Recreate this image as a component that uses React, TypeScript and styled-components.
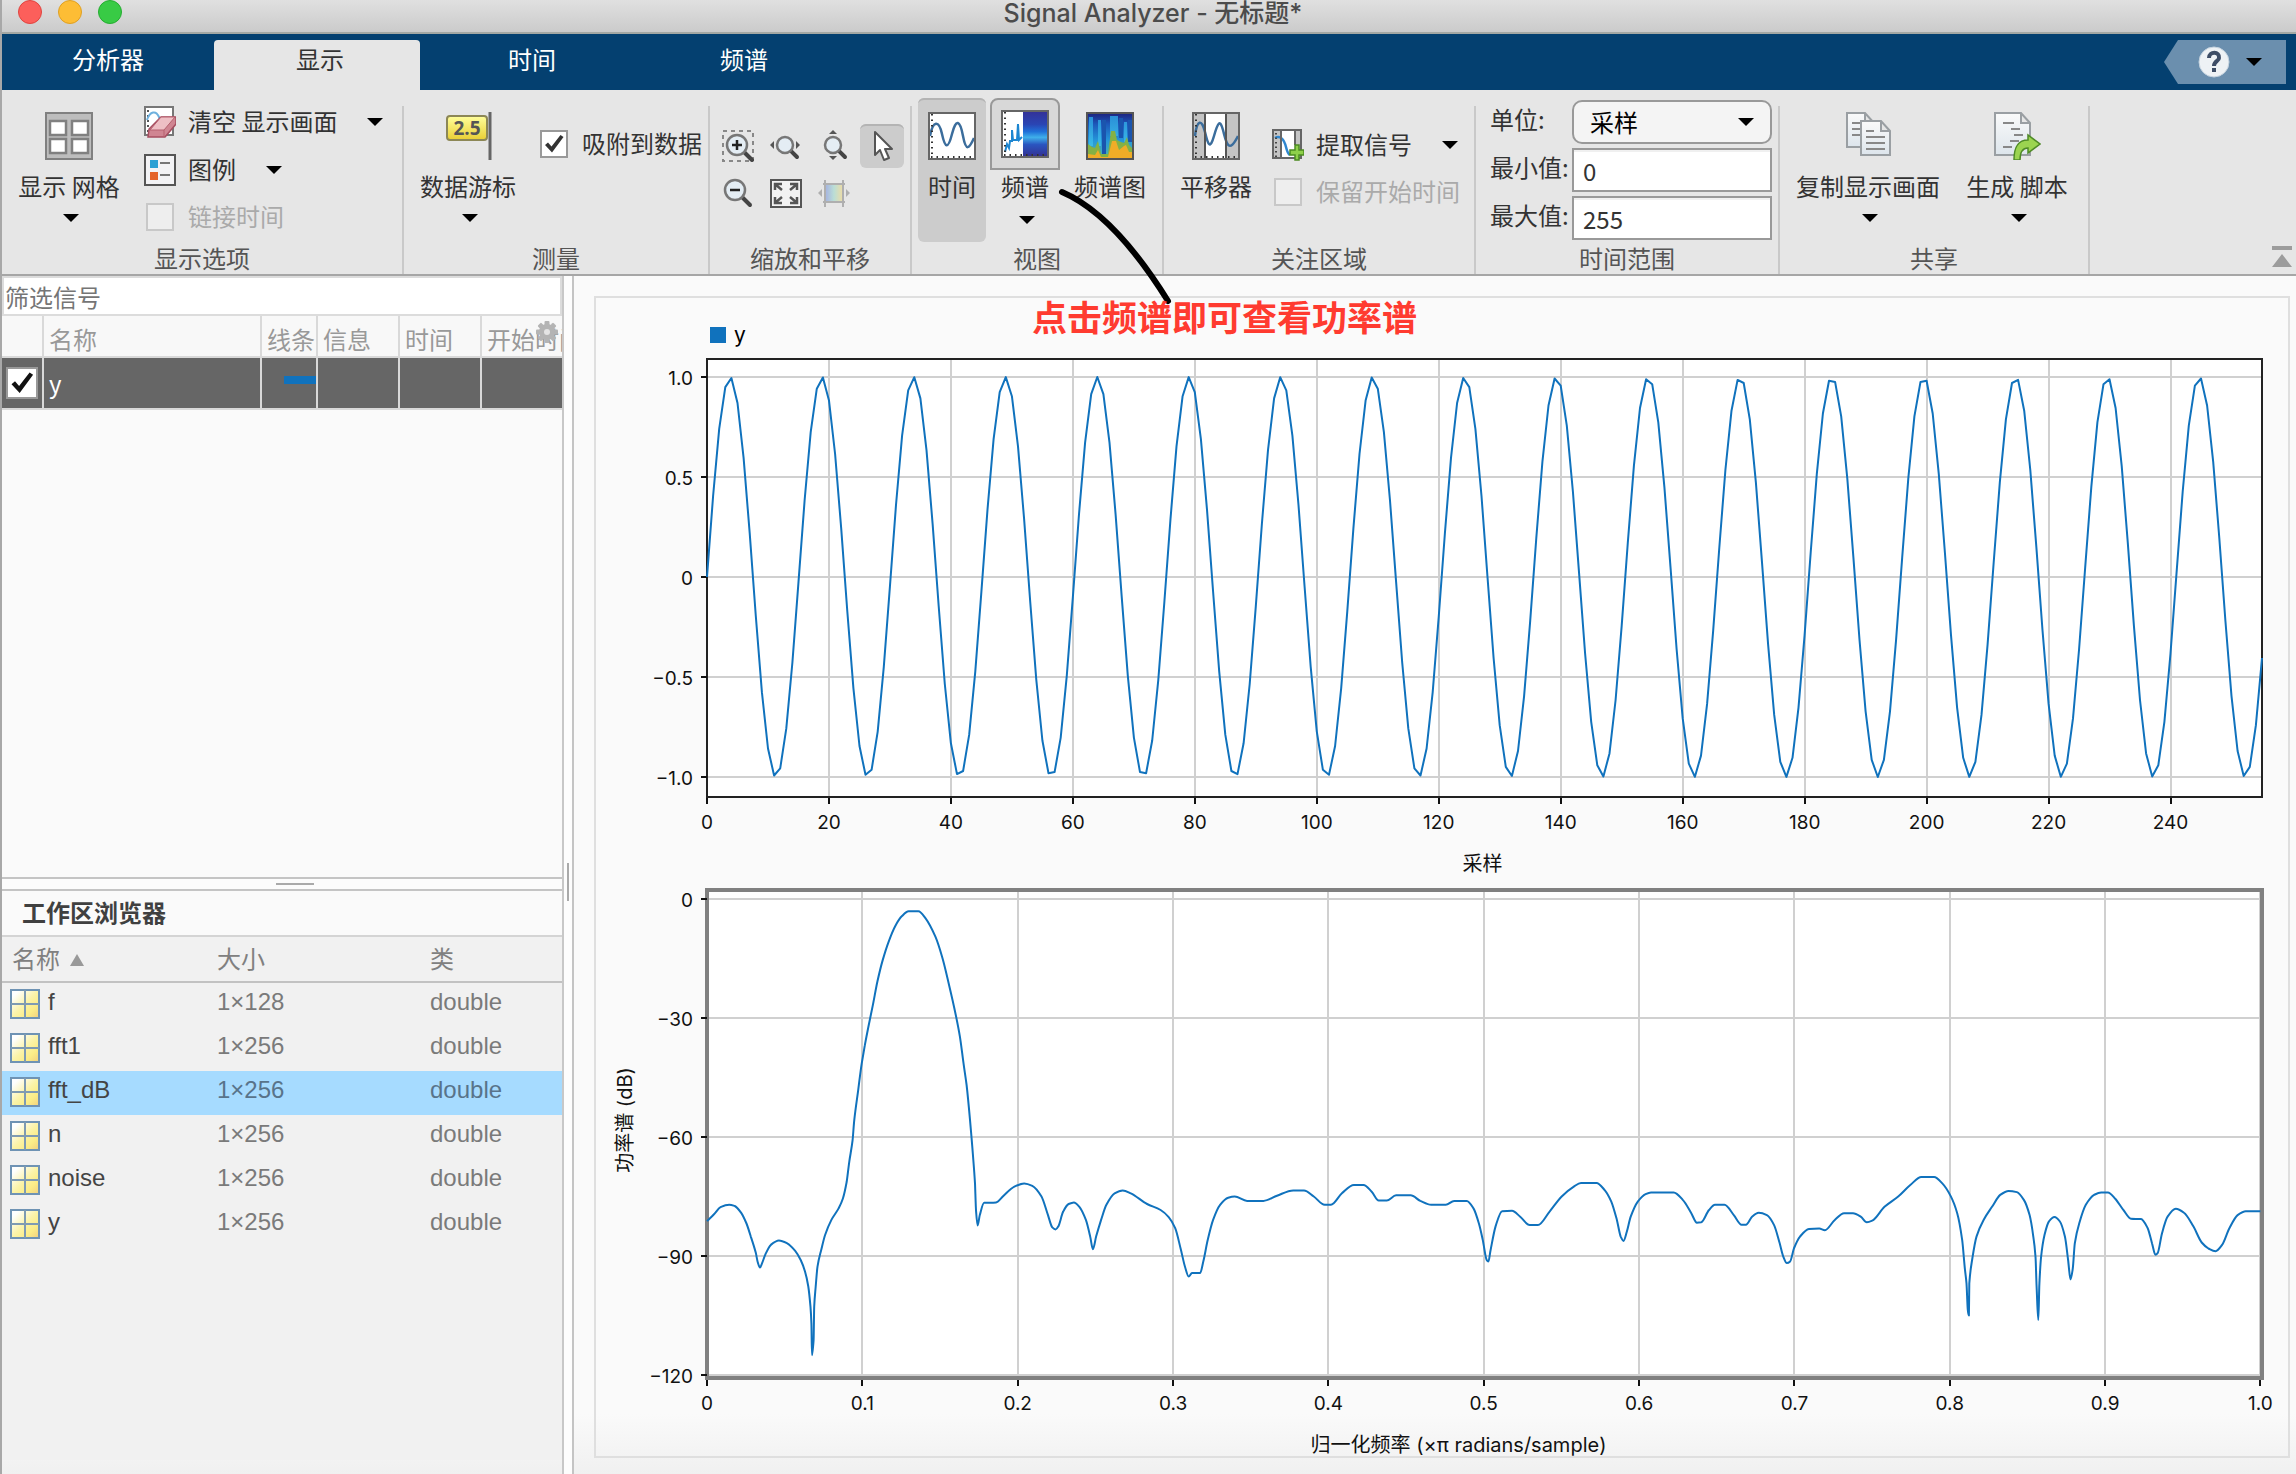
import React, { useLayoutEffect, useRef, useState } from "react";
import styled, { createGlobalStyle } from "styled-components";

const UI_FONT = '"Noto Sans CJK SC", "Noto Sans", sans-serif';
const LATIN_FONT = '"Liberation Sans", "Noto Sans CJK SC", sans-serif';
const CHART_FONT = 'Inter, "Noto Sans CJK SC", sans-serif';
const LINE_BLUE = "#1072bd";

const GlobalStyle = createGlobalStyle`
  *, *::before, *::after { box-sizing: border-box; }
  body { margin: 0; background: #fafafa; }
  button, input, select { font: inherit; color: inherit; margin: 0; }
`;

/* ---------- window frame ---------- */

const Window = styled.div`
  position: relative;
  display: flex;
  flex-direction: column;
  min-height: 100vh;
  border-left: 2px solid #a8a8a8;
  font: 24px/28px ${UI_FONT};
  color: #333;
  background: linear-gradient(#fafafa, #fafafa calc(100% - 60px), #f0f0f0);
`;

const TitleBar = styled.header`
  display: grid;
  grid-template-columns: 1fr auto 1fr;
  height: 34px;
  border-bottom: 2px solid #a4a8a4;
  background: linear-gradient(#e0e0e0, #cbcbcb);
`;

const Lights = styled.div`
  display: flex;
  gap: 16px;
  padding-left: 16px;
`;

const Light = styled.button<{ $fill: string; $edge: string }>`
  width: 24px;
  height: 24px;
  padding: 0;
  border: 1px solid ${(p) => p.$edge};
  border-radius: 50%;
  background: ${(p) => p.$fill};
`;

const Title = styled.h1`
  margin: 0;
  padding-left: 8px;
  font: 500 25px/26px ${CHART_FONT};
  color: #4c4c4c;
`;

const TabBar = styled.nav`
  display: flex;
  align-items: flex-end;
  gap: 6px;
  height: 56px;
  background: #044070;
`;

const Tab = styled.button<{ $active?: boolean }>`
  width: 206px;
  height: 50px;
  padding: 0 0 12px 6px;
  border: 0;
  border-radius: 4px 4px 0 0;
  background: ${(p) => (p.$active ? "#e6e6e6" : "transparent")};
  color: ${(p) => (p.$active ? "#333" : "#fff")};
`;

const HelpButton = styled.button`
  display: flex;
  align-items: center;
  justify-content: flex-end;
  gap: 16px;
  width: 122px;
  height: 44px;
  margin: 0 10px 6px auto;
  padding: 0 24px 0 0;
  border: 0;
  background: #6b8fae;
  clip-path: polygon(14px 0, 100% 0, 100% 100%, 14px 100%, 0 50%);
`;

/* ---------- ribbon ---------- */

const Ribbon = styled.section`
  display: flex;
  height: 186px;
  border-bottom: 2px solid #a6a6a6;
  background: #e6e6e6;
`;

const Group = styled.section<{ $width: number; $pad: number }>`
  display: flex;
  flex: none;
  flex-direction: column;
  justify-content: space-between;
  width: ${(p) => p.$width}px;
  background: linear-gradient(#c9c9c9, #c9c9c9) right bottom / 2px 168px no-repeat;
  --pad: ${(p) => p.$pad}px;
`;

const GroupBody = styled.div`
  display: flex;
  align-items: flex-start;
  padding: 8px 0 0 var(--pad);
`;

const GroupTitle = styled.h2`
  margin: 0 2px 2px 0;
  font: inherit;
  color: #555;
  text-align: center;
`;

const BigButton = styled.button<{ $width: number; $pressed?: boolean }>`
  display: flex;
  flex-direction: column;
  align-items: center;
  width: ${(p) => p.$width}px;
  height: 144px;
  padding: 14px 0 0;
  border: 0;
  border-radius: 6px;
  background: ${(p) => (p.$pressed ? "#cccccc" : "transparent")};
  box-shadow: ${(p) => (p.$pressed ? "inset 0 3px 0 -1px #b4b4b4" : "none")};
  white-space: nowrap;
  > svg:last-child { margin-left: 4px; }
`;

const BigLabel = styled.span`
  margin: 12px 0 14px;
`;

const SplitButton = styled.div`
  display: flex;
  flex-direction: column;
  width: 70px;
  margin: 0 14px 0 4px;
`;

const SplitTop = styled.button`
  height: 72px;
  padding: 10px 9px;
  border: 2px solid #999;
  border-radius: 8px 8px 0 0;
  background: #d8d8d8;
  line-height: 0;
`;

const SplitBottom = styled.button`
  display: flex;
  flex-direction: column;
  align-items: center;
  gap: 16px;
  height: 72px;
  padding: 2px 0 0;
  border: 0;
  background: transparent;
  > svg:last-child { margin-left: 4px; }
`;

const Stack = styled.div<{ $gap: number; $drop?: boolean }>`
  display: flex;
  flex-direction: column;
  padding-top: ${(p) => (p.$drop ? 23 : 0)}px;
  margin-left: ${(p) => p.$gap}px;
`;

const RowButton = styled.button`
  display: flex;
  align-items: center;
  height: 48px;
  padding: 0;
  border: 0;
  background: transparent;
  white-space: nowrap;
`;

const RowLabel = styled.label<{ $muted?: boolean }>`
  display: flex;
  align-items: center;
  height: 46px;
  color: ${(p) => (p.$muted ? "#aaa" : "#333")};
  white-space: nowrap;
`;

const IconSlot = styled.span`
  display: flex;
  justify-content: center;
  flex: none;
  width: 32px;
  margin-right: 12px;
`;

const RowText = styled.span`
  margin-right: 30px;
  padding-bottom: 3px;
`;

const CheckBox = styled.span<{ $size: number; $disabled?: boolean }>`
  position: relative;
  display: block;
  width: ${(p) => p.$size}px;
  height: ${(p) => p.$size}px;
  border: 2px solid ${(p) => (p.$disabled ? "#c8c8c8" : "#999")};
  background: ${(p) => (p.$disabled ? "#eee" : "#fff")};
  input {
    appearance: none;
    display: block;
    width: 100%;
    height: 100%;
  }
  svg {
    position: absolute;
    inset: 0;
    width: 100%;
    height: 100%;
    pointer-events: none;
  }
`;

const ToolGrid = styled.div`
  display: grid;
  grid-template-columns: repeat(4, 48px);
  padding-top: 24px;
`;

const ToolButton = styled.button<{ $pressed?: boolean }>`
  display: flex;
  align-items: center;
  justify-content: center;
  width: 44px;
  height: 44px;
  margin: 2px;
  padding: 0;
  border: 0;
  border-radius: 6px;
  background: ${(p) => (p.$pressed ? "#cccccc" : "transparent")};
  box-shadow: ${(p) => (p.$pressed ? "inset 0 3px 0 -1px #b4b4b4" : "none")};
`;

const RangeForm = styled.form`
  display: grid;
  flex: 1;
  grid-template-columns: 82px 1fr;
  grid-auto-rows: 44px;
  row-gap: 4px;
  padding: 2px 8px 0 0;
  label { line-height: 38px; white-space: nowrap; }
`;

const SelectBox = styled.div`
  position: relative;
  select {
    appearance: none;
    width: 100%;
    height: 44px;
    padding: 0 40px 1px 16px;
    border: 2px solid #999;
    border-radius: 10px;
    background: #f4f4f4;
    color: #000;
  }
  svg {
    position: absolute;
    right: 18px;
    top: 18px;
    pointer-events: none;
  }
`;

const RangeInput = styled.input`
  width: 100%;
  height: 44px;
  padding: 0 9px;
  border: 2px solid #999;
  background: #fff;
  box-shadow: inset 0 2px 0 #f0f0f0;
`;

const CollapseButton = styled.button`
  align-self: flex-end;
  margin: 0 4px 6px auto;
  padding: 0;
  border: 0;
  background: transparent;
  line-height: 0;
`;

/* ---------- left column ---------- */

const Main = styled.main`
  display: flex;
  flex: 1;
`;

const LeftColumn = styled.aside`
  display: flex;
  flex: none;
  flex-direction: column;
  width: 562px;
  border-right: 2px solid #c8c8c8;
`;

const SignalPanel = styled.section`
  position: relative;
  flex: 601 1 0;
`;

const FilterInput = styled.input`
  display: block;
  width: 100%;
  height: 40px;
  padding: 0 1px;
  border: 2px solid #dcdcdc;
  background: #fff;
  &::placeholder { color: #757575; opacity: 1; }
`;

const SignalTable = styled.table`
  width: 100%;
  table-layout: fixed;
  border-spacing: 0;
  th, td {
    overflow: hidden;
    padding: 0 0 0 5px;
    border-right: 2px solid #d9d9d9;
    border-bottom: 2px solid #d9d9d9;
    text-align: left;
    white-space: nowrap;
  }
  th:last-child, td:last-child { border-right: 0; }
  th { height: 42px; padding-top: 6px; background: #f8f8f8; color: #999; font-weight: 400; }
  td { height: 52px; background: #666; color: #fff; }
  td:first-child { padding-left: 4px; }
`;

const LineSwatch = styled.div`
  width: 32px;
  height: 8px;
  margin: 0 0 6px auto;
  background: ${LINE_BLUE};
`;

const GearButton = styled.button`
  position: absolute;
  top: 45px;
  right: 4px;
  padding: 0;
  border: 0;
  background: transparent;
  line-height: 0;
`;

const RowSplitter = styled.div`
  display: flex;
  align-items: center;
  justify-content: center;
  height: 14px;
  padding-left: 26px;
  border: solid #c4c4c4;
  border-width: 2px 0;
  background: #fcfcfc;
  &::before { content: ""; width: 38px; height: 2px; background: #aaa; }
`;

const ColumnSplitter = styled.div`
  display: flex;
  align-items: center;
  justify-content: center;
  width: 10px;
  padding-top: 14px;
  border-right: 2px solid #c4c4c4;
  background: #fdfdfd;
  &::before { content: ""; width: 2px; height: 38px; background: #aaa; }
`;

const WorkspacePanel = styled.section`
  display: flex;
  flex: 583 1 0;
  flex-direction: column;
`;

const WorkspaceTitle = styled.h2`
  height: 46px;
  margin: 0;
  padding-left: 20px;
  border-bottom: 2px solid #d4d4d4;
  font: 700 24px/42px ${UI_FONT};
  color: #404040;
`;

const WorkspaceBody = styled.div`
  flex: 1;
  margin-bottom: 14px;
  background: #f1f1f1;
`;

const WorkspaceTable = styled.table`
  width: 100%;
  table-layout: fixed;
  border-spacing: 0;
  th {
    height: 46px;
    padding: 0 0 2px;
    border-bottom: 2px solid #c2c2c2;
    color: #808080;
    font-weight: 400;
    text-align: left;
  }
  th:first-child { padding-left: 10px; }
`;

const SortMark = styled.svg`
  margin: 0 0 2px 10px;
`;

const VariableRow = styled.tr<{ $selected?: boolean }>`
  background: ${(p) => (p.$selected ? "#a6dbff" : "transparent")};
  td {
    height: 44px;
    padding: 0 0 6px;
    font-family: ${LATIN_FONT};
    color: ${(p) => (p.$selected ? "#58738a" : "#7a7a7a")};
  }
`;

const VariableName = styled.span`
  display: flex;
  gap: 8px;
  height: 32px;
  padding: 2px 0 0 8px;
  color: #444;
  svg { flex: none; margin-top: 1px; }
`;

/* ---------- chart area ---------- */

const Canvas = styled.section`
  display: flex;
  flex: 1;
  flex-direction: column;
  min-width: 0;
  margin: 20px 6px 16px 20px;
  border: 2px solid #dfdfdf;
`;

const Legend = styled.div`
  display: flex;
  align-items: center;
  gap: 8px;
  height: 52px;
  padding: 22px 0 0 114px;
  font: 21px/28px ${CHART_FONT};
  color: #000;
  &::before { content: ""; width: 16px; height: 16px; background: ${LINE_BLUE}; }
`;

const ChartBox = styled.div<{ $grow: number }>`
  flex: ${(p) => p.$grow} 1 0;
  min-height: 0;
  svg { display: block; overflow: visible; }
  text { font: 19px ${CHART_FONT}; fill: #111; }
  text.axis-title { font-size: 20px; }
`;

const Note = styled.p`
  position: absolute;
  top: 296px;
  left: 1030px;
  margin: 0;
  font: 700 35px/40px ${UI_FONT};
  color: #ff3b30;
  white-space: nowrap;
`;

const NoteStroke = styled.svg`
  position: absolute;
  top: 180px;
  left: 1048px;
  pointer-events: none;
`;

/* ---------- icons ---------- */

const Arrow = () => (
  <svg width="16" height="8" viewBox="0 0 16 8" aria-hidden="true">
    <path d="M0 0H16L8 8Z" fill="#000" />
  </svg>
);

const Tick = ({ color = "#333" }: { color?: string }) => (
  <svg viewBox="0 0 24 24" aria-hidden="true">
    <path d="M3 13 6 10.500 9.500 14.500 18.500 3 21.500 5 10 20.500Z" fill={color} />
  </svg>
);

const GridIcon = () => (
  <svg width="48" height="48" viewBox="0 0 48 48" aria-hidden="true">
    <rect x="1" y="1" width="46" height="46" fill="#bdbdbd" stroke="#808080" strokeWidth="2" />
    {[5, 27].map((x) =>
      [9, 27].map((y) => (
        <rect key={`${x}-${y}`} x={x} y={y} width="16" height="14" fill="#fff" stroke="#808080" strokeWidth="2.500" />
      ))
    )}
  </svg>
);

const EraseIcon = () => (
  <svg width="32" height="32" viewBox="0 0 32 32" aria-hidden="true">
    <rect x="1" y="1" width="28" height="28" fill="#fff" stroke="#777" strokeWidth="2" />
    <path d="M4 4V28" stroke="#555" strokeWidth="2" strokeDasharray="2 3" />
    <path d="M3 14C6 5 12 4 15 11S18 16 20 16" fill="none" stroke="#6fb1de" strokeWidth="2" />
    <path d="M17 11H32V18L21 31H4L5 23Z" fill="#d08592" stroke="#a64e60" strokeWidth="1.500" />
    <path d="M17 11H31L20 24H6Z" fill="#eebfc5" stroke="#b5616f" />
    <path d="M20 24V31" stroke="#b5616f" />
  </svg>
);

const LegendIcon = () => (
  <svg width="32" height="32" viewBox="0 0 32 32" aria-hidden="true">
    <rect x="1" y="1" width="30" height="30" fill="#f3f3f5" stroke="#555" strokeWidth="2" />
    <rect x="6" y="6" width="8" height="8" fill="#2ba0d4" />
    <rect x="6" y="18" width="8" height="8" fill="#e4632a" />
    <path d="M16 9H26M16 21H26" stroke="#777" strokeWidth="2" />
  </svg>
);

const CursorIcon = () => (
  <svg width="48" height="48" viewBox="0 0 48 48" aria-hidden="true">
    <defs>
      <linearGradient id="badge" x1="0" y1="0" x2="0" y2="1">
        <stop offset="0" stopColor="#ffff9c" />
        <stop offset="1" stopColor="#e9ce33" />
      </linearGradient>
    </defs>
    <rect x="3" y="4" width="40" height="24" rx="3" fill="url(#badge)" stroke="#8c8756" strokeWidth="2" />
    <text x="23" y="23" textAnchor="middle" fontFamily="Open Sans, sans-serif" fontWeight="700" fontSize="19" fill="#555">2.5</text>
    <path d="M46 0V48" stroke="#666" strokeWidth="3" />
  </svg>
);

const Lens = ({ cx, cy, r, sign }: { cx: number; cy: number; r: number; sign?: string }) => (
  <g>
    <path d={`M${cx + r * 0.7} ${cy + r * 0.7}l${r * 0.8} ${r * 0.8}`} stroke="#444" strokeWidth="4" strokeLinecap="round" />
    <circle cx={cx} cy={cy} r={r} fill="#e4edf4" stroke="#777" strokeWidth="2.500" />
    {sign === "+" && <path d={`M${cx - 5} ${cy}h10M${cx} ${cy - 5}v10`} stroke="#222" strokeWidth="2.500" />}
    {sign === "-" && <path d={`M${cx - 5} ${cy}h10`} stroke="#222" strokeWidth="2.500" />}
  </g>
);

const ZoomInIcon = () => (
  <svg width="32" height="32" viewBox="0 0 32 32" aria-hidden="true">
    <rect x="1" y="1" width="30" height="30" fill="none" stroke="#888" strokeWidth="2" strokeDasharray="4 4" />
    <Lens cx={15} cy={15} r={10} sign="+" />
  </svg>
);

const ZoomOutIcon = () => (
  <svg width="32" height="32" viewBox="0 0 32 32" aria-hidden="true">
    <Lens cx={13} cy={12} r={10} sign="-" />
  </svg>
);

const ZoomXIcon = () => (
  <svg width="32" height="32" viewBox="0 0 32 32" aria-hidden="true">
    <Lens cx={15} cy={15} r={8} />
    <path d="M4 11V19L0 15ZM26 11V19L30 15Z" fill="#555" />
  </svg>
);

const ZoomYIcon = () => (
  <svg width="32" height="32" viewBox="0 0 32 32" aria-hidden="true">
    <Lens cx={15} cy={15} r={8} />
    <path d="M11 4H19L15 0ZM11 26H19L15 30Z" fill="#555" />
  </svg>
);

const PointerIcon = () => (
  <svg width="32" height="32" viewBox="0 0 32 32" aria-hidden="true">
    <path d="M9 2V25L14 20 18 30 23 28 19 19H26Z" fill="#fff" stroke="#555" strokeWidth="2" strokeLinejoin="round" />
  </svg>
);

const FitIcon = () => (
  <svg width="32" height="32" viewBox="0 0 32 32" aria-hidden="true">
    <rect x="1" y="2" width="30" height="27" fill="#f2f2f2" stroke="#555" strokeWidth="2" />
    <path
      d="M5 12V6H12M20 6H27V12M27 19V25H20M12 25H5V19M6 7L12 12M26 7L20 12M6 24L12 19M26 24L20 19"
      fill="none"
      stroke="#555"
      strokeWidth="2.500"
    />
  </svg>
);

const PanIcon = () => (
  <svg width="32" height="32" viewBox="0 0 32 32" opacity="0.7" aria-hidden="true">
    <defs>
      <linearGradient id="spectrumBand">
        <stop offset="0" stopColor="#8a9be0" />
        <stop offset="0.5" stopColor="#a9dbd0" />
        <stop offset="1" stopColor="#f3d98a" />
      </linearGradient>
    </defs>
    <rect x="7" y="6" width="18" height="18" fill="url(#spectrumBand)" />
    <path d="M7 2V29M25 2V29M5 6H27M5 24H27" stroke="#999" strokeWidth="2" />
    <path d="M4 11V19L0 15ZM28 11V19L32 15Z" fill="#999" />
  </svg>
);

const PlotFrame = () => (
  <>
    <path d="M4 2V46" stroke="#333" strokeWidth="2" strokeDasharray="1.500 4" />
    <path d="M3 45H46" stroke="#333" strokeWidth="2" strokeDasharray="1.500 4" />
    <rect x="1" y="1" width="46" height="46" fill="none" stroke="#666" strokeWidth="2" />
  </>
);

const TimeIcon = () => (
  <svg width="48" height="48" viewBox="0 0 48 48" aria-hidden="true">
    <rect width="48" height="48" fill="#fff" />
    <path d="M2 24C5 8 11 8 14 22S20 38 24 22 32 8 35 24 41 37 46 26" fill="none" stroke="#3b6d9c" strokeWidth="2.500" />
    <PlotFrame />
  </svg>
);

const SpectrumIcon = () => (
  <svg width="48" height="48" viewBox="0 0 48 48" aria-hidden="true">
    <defs>
      <linearGradient id="haze" x1="0" y1="0" x2="0" y2="1">
        <stop offset="0" stopColor="#352f94" />
        <stop offset="0.3" stopColor="#2a45b4" />
        <stop offset="0.45" stopColor="#2070d8" />
        <stop offset="0.57" stopColor="#3fb0ea" />
        <stop offset="0.72" stopColor="#2a55c0" />
        <stop offset="1" stopColor="#352c8c" />
      </linearGradient>
    </defs>
    <rect width="48" height="48" fill="#fff" />
    <rect x="22" width="26" height="48" fill="url(#haze)" />
    <path d="M4 42 6 34 8 38 9 31H11V20L12 30H16L17 14 18 30 21 27" fill="none" stroke="#1c86d1" strokeWidth="2" />
    <PlotFrame />
  </svg>
);

const SpectrogramIcon = () => (
  <svg width="48" height="48" viewBox="0 0 48 48" aria-hidden="true">
    <defs>
      <linearGradient id="fade" x1="0" y1="0" x2="0" y2="1">
        <stop offset="0" stopColor="#1d1c78" />
        <stop offset="0.25" stopColor="#1c58ba" />
        <stop offset="0.6" stopColor="#2597da" />
        <stop offset="1" stopColor="#58b9a0" />
      </linearGradient>
      <linearGradient id="glow" x1="0" y1="0" x2="0" y2="1">
        <stop offset="0" stopColor="#2a8fd8" />
        <stop offset="1" stopColor="#3bbbe8" />
      </linearGradient>
    </defs>
    <rect width="48" height="48" fill="url(#fade)" />
    <path d="M3 5H7V34H3ZM12 8H15V34H12ZM24 4H32V24H24ZM38 10H41V30H38Z" fill="url(#glow)" />
    <path d="M16 8H20V42H16ZM33 6H37V26H33ZM42 8H46V30H42Z" fill="#1a55ae" />
    <path d="M2 47V32L6 35 9 36 12 29 15 42H22L25 19H29L31 28 35 30 38 31 41 25 43 33 46 36V47Z" fill="#84b145" />
    <path d="M2 47V42L9 43 12 38 15 45H22L26 29H30L33 38 38 34 40 33 43 40H46V47Z" fill="#f0ad27" />
    <rect x="1" y="1" width="46" height="46" fill="none" stroke="#555" strokeWidth="2" />
  </svg>
);

const PannerIcon = () => (
  <svg width="48" height="48" viewBox="0 0 48 48" aria-hidden="true">
    <rect width="48" height="48" fill="#c4c4c4" />
    <rect x="13" y="2" width="21" height="44" fill="#fff" />
    <path d="M3 24C5 7 10 7 13 20S18 38 22 24 28 7 31 18 36 44 46 24" fill="none" stroke="#3b6d9c" strokeWidth="2.500" />
    <path d="M13 2V46M34 2V46" stroke="#555" strokeWidth="2" />
    <PlotFrame />
  </svg>
);

const ExtractIcon = () => (
  <svg width="32" height="32" viewBox="0 0 32 32" aria-hidden="true">
    <rect x="1" y="1" width="28" height="28" fill="#c4c4c4" stroke="#666" strokeWidth="2" />
    <rect x="9" y="2" width="14" height="26" fill="#fff" />
    <path d="M3 9C8 6 12 10 14 18S17 25 18 26" fill="none" stroke="#2f86cf" strokeWidth="2.500" />
    <path d="M9 2V28M23 2V16" stroke="#666" strokeWidth="2" />
    <path d="M4 4V28" stroke="#444" strokeWidth="2" strokeDasharray="1.500 3" />
    <path d="M23 16H27V21H32V26H27V31H23V26H18V21H23Z" fill="#8fd04a" stroke="#4c8a22" strokeWidth="1.500" />
  </svg>
);

const Page = ({ x, y, w, h }: { x: number; y: number; w: number; h: number }) => (
  <path
    d={`M${x} ${y}h${w - 9}l9 10v${h - 10}h${-w}ZM${x + w - 9} ${y}v10h9`}
    fill="url(#paper)"
    stroke="#9a9fa3"
    strokeWidth="2"
  />
);

const PaperFill = () => (
  <defs>
    <linearGradient id="paper" x1="0" y1="0" x2="0" y2="1">
      <stop offset="0" stopColor="#fafafa" />
      <stop offset="1" stopColor="#dde5ec" />
    </linearGradient>
  </defs>
);

const CopyIcon = () => (
  <svg width="48" height="48" viewBox="0 0 48 48" aria-hidden="true">
    <PaperFill />
    <Page x={3} y={1} w={27} h={34} />
    <path d="M8 11H16M8 17H16M8 23H16" stroke="#888" strokeWidth="2" />
    <Page x={17} y={9} w={29} h={34} />
    <path d="M22 19H30M22 25H41M22 31H41M22 37H41" stroke="#888" strokeWidth="2" />
  </svg>
);

const ScriptIcon = () => (
  <svg width="48" height="48" viewBox="0 0 48 48" aria-hidden="true">
    <Page x={2} y={1} w={35} h={42} />
    <path d="M10 11H21M18 17H27M21 23H30M17 29H26M10 35H19" stroke="#888" strokeWidth="2" />
    <path d="M21 48C21 36 24 28 35 28V23L47 32 35 41V36C29 36 27 40 27 48Z" fill="#9bd450" stroke="#4e8a26" strokeWidth="1.500" />
  </svg>
);

const HelpIcon = () => (
  <svg width="32" height="32" viewBox="0 0 32 32" aria-hidden="true">
    <circle cx="16" cy="16" r="15" fill="#eef2f5" stroke="#c4d2de" />
    <path d="M11 12C11 5 22 5 21 12 21 15 16 15 16 20" fill="none" stroke="#3d4d66" strokeWidth="4" />
    <rect x="14" y="22" width="4" height="4" fill="#3d4d66" />
  </svg>
);

const CollapseIcon = () => (
  <svg width="20" height="22" viewBox="0 0 20 22" aria-hidden="true">
    <path d="M0 0H20V4H0ZM10 8L20 21H0Z" fill="#9c9c9c" />
  </svg>
);

const GearIcon = () => (
  <svg width="22" height="22" viewBox="0 0 22 22" aria-hidden="true">
    {[0, 45, 90, 135].map((a) => (
      <rect key={a} x="8.500" y="0" width="5" height="22" rx="1" fill="#b4b4b4" transform={`rotate(${a} 11 11)`} />
    ))}
    <circle cx="11" cy="11" r="8" fill="#b4b4b4" />
    <circle cx="11" cy="11" r="3" fill="#e4e4e4" />
  </svg>
);

const MatrixIcon = () => (
  <svg width="30" height="30" viewBox="0 0 30 30" aria-hidden="true">
    <defs>
      <linearGradient id="cell" x1="0" y1="0" x2="1" y2="1">
        <stop offset="0.15" stopColor="#ffffff" />
        <stop offset="0.5" stopColor="#fbf3a8" />
        <stop offset="0.75" stopColor="#fbec86" />
        <stop offset="1" stopColor="#f0cf80" />
      </linearGradient>
    </defs>
    <rect x="1" y="1" width="28" height="28" fill="url(#cell)" stroke="#6f93b4" strokeWidth="2" />
    <path d="M15 1V29M1 15H29" stroke="#7f9bb2" strokeWidth="2" />
  </svg>
);

/* ---------- charts ---------- */

type Point = [number, number];

interface ChartProps {
  grow: number;
  margin: { top: number; right: number; bottom: number; left: number };
  xRange: Point;
  yRange: Point;
  xTicks: number[];
  yTicks: number[];
  formatX: (v: number) => string;
  formatY: (v: number) => string;
  xTitle: string;
  yTitle?: string;
  titleShift?: Point;
  points: Point[];
  smooth?: boolean;
  frame: { color: string; width: number };
}

const f1 = (v: number) => v.toFixed(1);

const straightPath = (pts: Point[]) => "M" + pts.map(([x, y]) => `${f1(x)} ${f1(y)}`).join("L");

// monotone cubic interpolation: smooth, with no overshoot at the notches
const smoothPath = (pts: Point[]) => {
  const n = pts.length;
  const slope = pts.slice(1).map(([x, y], i) => (y - pts[i][1]) / (x - pts[i][0]));
  const tangent = pts.map((_, i) => {
    if (i === 0) return slope[0];
    if (i === n - 1) return slope[n - 2];
    const a = slope[i - 1];
    const b = slope[i];
    return a * b <= 0 ? 0 : (2 * a * b) / (a + b);
  });
  let d = `M${f1(pts[0][0])} ${f1(pts[0][1])}`;
  for (let i = 0; i < n - 1; i++) {
    const [x0, y0] = pts[i];
    const [x1, y1] = pts[i + 1];
    const h = (x1 - x0) / 3;
    d += `C${f1(x0 + h)} ${f1(y0 + h * tangent[i])} ${f1(x1 - h)} ${f1(y1 - h * tangent[i + 1])} ${f1(x1)} ${f1(y1)}`;
  }
  return d;
};

const Chart = ({
  grow, margin, xRange, yRange, xTicks, yTicks, formatX, formatY,
  xTitle, yTitle, titleShift = [0, 0], points, smooth, frame,
}: ChartProps) => {
  const box = useRef<HTMLDivElement>(null);
  const [size, setSize] = useState({ w: 0, h: 0 });

  useLayoutEffect(() => {
    const el = box.current;
    if (!el) return;
    const measure = () => setSize({ w: el.clientWidth, h: el.clientHeight });
    measure();
    const observer = new ResizeObserver(measure);
    observer.observe(el);
    return () => observer.disconnect();
  }, []);

  const left = margin.left;
  const right = size.w - margin.right;
  const top = margin.top;
  const bottom = size.h - margin.bottom;
  const sx = (v: number) => left + ((v - xRange[0]) / (xRange[1] - xRange[0])) * (right - left);
  const sy = (v: number) => bottom - ((v - yRange[0]) / (yRange[1] - yRange[0])) * (bottom - top);
  const edge = bottom + frame.width / 2;
  const titleY = (top + bottom) / 2 + titleShift[1];
  const screen = points.map(([x, y]): Point => [sx(x), sy(y)]);

  return (
    <ChartBox $grow={grow} ref={box}>
      {size.w > 0 && (
        <svg width={size.w} height={size.h} role="img" aria-label={yTitle ?? xTitle}>
          <rect x={left} y={top} width={right - left} height={bottom - top} fill="#fff" />
          <g stroke="#d0d0d0" strokeWidth="2">
            {xTicks.map((t) => <path key={t} d={`M${Math.round(sx(t))} ${top}V${bottom}`} />)}
            {yTicks.map((t) => <path key={t} d={`M${left} ${Math.round(sy(t))}H${right}`} />)}
          </g>
          <rect x={left} y={top} width={right - left} height={bottom - top} fill="none" stroke={frame.color} strokeWidth={frame.width} />
          <g stroke="#111" strokeWidth="2">
            {xTicks.map((t) => <path key={t} d={`M${Math.round(sx(t))} ${edge}v6`} />)}
            {yTicks.map((t) => <path key={t} d={`M${left - 6} ${Math.round(sy(t))}h6`} />)}
          </g>
          <path
            d={smooth ? smoothPath(screen) : straightPath(screen)}
            fill="none"
            stroke={LINE_BLUE}
            strokeWidth="2"
            strokeLinejoin="round"
          />
          {xTicks.map((t) => (
            <text key={t} x={sx(t)} y={bottom + 32} textAnchor="middle">{formatX(t)}</text>
          ))}
          {yTicks.map((t) => (
            <text key={t} x={left - 14} y={sy(t) + 8} textAnchor="end">{formatY(t)}</text>
          ))}
          <text className="axis-title" x={(left + right) / 2 + titleShift[0]} y={bottom + 74} textAnchor="middle">{xTitle}</text>
          {yTitle && (
            <text className="axis-title" transform={`translate(36 ${titleY}) rotate(-90)`} textAnchor="middle">{yTitle}</text>
          )}
        </svg>
      )}
    </ChartBox>
  );
};

const minus = (s: string) => s.replace("-", "−");
const oneDecimal = (v: number) => (v === 0 ? "0" : minus(v.toFixed(1)));

// 17 full cycles over a 256-sample record
const signal: Point[] = Array.from({ length: 256 }, (_, n) => [n, Math.sin((2 * Math.PI * 17 * n) / 256)]);

// power spectrum, normalised frequency against dB
const spectrum: Point[] = [
  [0, -81.2], [0.0045, -79.5], [0.0087, -77.7], [0.0143, -77.1], [0.0178, -77.4], [0.022, -79.1], [0.0254, -81.8],
  [0.0282, -85.1], [0.0314, -89.2], [0.0328, -91.8], [0.0341, -92.9], [0.0355, -91.8], [0.0376, -89.6], [0.0411, -87.2],
  [0.0463, -86.1], [0.0516, -86.8], [0.0568, -88.7], [0.0603, -91], [0.0631, -93.9], [0.0652, -97.7], [0.0666, -102.8],
  [0.0672, -107], [0.0676, -115], [0.0686, -111.2], [0.069, -102.8], [0.07, -97.7], [0.0711, -92.7], [0.0735, -88.5],
  [0.076, -84.7], [0.0801, -80.9], [0.0847, -78], [0.0875, -75.5], [0.0899, -71.3], [0.0916, -66.2], [0.0937, -60.8],
  [0.0948, -55.7], [0.0973, -48.2], [0.0996, -41.5], [0.1016, -36.9], [0.1039, -32.2], [0.1068, -26.7], [0.1097, -20.8],
  [0.1131, -15.4], [0.1169, -10.8], [0.1212, -6.8], [0.1255, -4.3], [0.1298, -3.1], [0.1361, -3.1], [0.1407, -4.9],
  [0.147, -9.5], [0.1513, -14.5], [0.1556, -21.3], [0.1599, -28.8], [0.1628, -34.7], [0.1651, -41.4], [0.1671, -46.9],
  [0.1693, -55.7], [0.1711, -64.1], [0.1725, -71.7], [0.1732, -78.8], [0.1742, -82.3], [0.1756, -79.7], [0.1784, -76.6],
  [0.1861, -76.5], [0.1909, -74.8], [0.1979, -72.5], [0.2042, -71.7], [0.2094, -72.3], [0.2153, -75], [0.2195, -79.7],
  [0.2223, -82.8], [0.2244, -83.3], [0.2261, -82.6], [0.2293, -78.8], [0.2328, -76.9], [0.2362, -76.5], [0.2397, -77.6],
  [0.2439, -80.9], [0.2467, -85.1], [0.2484, -88.3], [0.2505, -85.1], [0.2537, -80.9], [0.2571, -77.1], [0.2624, -74.2],
  [0.2676, -73.5], [0.2728, -74.2], [0.2833, -76.9], [0.292, -78.4], [0.2972, -80.2], [0.3014, -83], [0.3049, -88.1],
  [0.3077, -92.7], [0.3101, -95.2], [0.3122, -94.3], [0.3174, -94.3], [0.3195, -91.4], [0.3223, -86], [0.3258, -80.9],
  [0.3303, -77.1], [0.3355, -75.3], [0.3397, -75], [0.3477, -76.1], [0.3582, -76.1], [0.3669, -74.8], [0.3774, -73.5],
  [0.3843, -73.5], [0.3906, -75], [0.3976, -77.1], [0.4017, -77.1], [0.4087, -74.2], [0.4164, -72.1], [0.4226, -72.1],
  [0.4279, -73.8], [0.4324, -76], [0.4376, -76], [0.4436, -74.7], [0.453, -74.7], [0.4592, -76.1], [0.4662, -77.1],
  [0.4756, -77.1], [0.4809, -76.1], [0.4891, -76.1], [0.4934, -78], [0.4969, -81.8], [0.4994, -86], [0.5019, -91],
  [0.503, -91.4], [0.5044, -88.5], [0.5076, -82.6], [0.5118, -78.7], [0.5182, -78.6], [0.5235, -80.1], [0.5296, -82.2],
  [0.5349, -82.2], [0.5424, -78.8], [0.5502, -75], [0.558, -72.5], [0.5626, -71.6], [0.5726, -71.6], [0.5779, -73.4],
  [0.5821, -76.3], [0.5857, -80.9], [0.5882, -85.1], [0.59, -86.2], [0.5921, -83.9], [0.5946, -80.1], [0.5992, -76.3],
  [0.6042, -74.4], [0.6077, -74], [0.6223, -74], [0.6283, -75.9], [0.6336, -79.2], [0.6372, -81.6], [0.64, -81.5],
  [0.645, -78.4], [0.6489, -77.1], [0.655, -77.1], [0.661, -79.7], [0.666, -82.1], [0.6688, -82.1], [0.6727, -80.1],
  [0.677, -79.1], [0.6823, -79.7], [0.6869, -82.2], [0.6905, -86.8], [0.6929, -90.2], [0.6951, -91.8], [0.6972, -91.4],
  [0.6997, -88.1], [0.7036, -85.1], [0.7093, -83.2], [0.716, -83.1], [0.7196, -83.5], [0.726, -80.9], [0.732, -79.2],
  [0.7377, -79.2], [0.7427, -80.1], [0.7466, -81.5], [0.7501, -81.1], [0.758, -77.6], [0.7668, -75], [0.7746, -72.1],
  [0.7817, -70.1], [0.7899, -70.1], [0.7952, -71.7], [0.8006, -74.9], [0.8048, -79.2], [0.808, -86], [0.8098, -93.5],
  [0.8108, -96.9], [0.8116, -103.6], [0.8123, -105], [0.8126, -96.9], [0.8144, -91], [0.8172, -85.1], [0.8218, -80.9],
  [0.8272, -77.6], [0.8325, -74.6], [0.8379, -73.6], [0.8432, -73.9], [0.8478, -75.9], [0.8514, -79.7], [0.8538, -85.1],
  [0.8552, -90.2], [0.8559, -97.7], [0.857, -106.1], [0.8577, -96.9], [0.8588, -90.2], [0.861, -84.7], [0.8638, -81.3],
  [0.8674, -80.2], [0.8709, -81.3], [0.8741, -85.1], [0.8762, -91], [0.8777, -95.9], [0.8791, -93.5], [0.8805, -86.8],
  [0.8833, -81.8], [0.8876, -77.1], [0.8929, -74.6], [0.8975, -74], [0.9018, -74], [0.9064, -75.5], [0.9118, -78.4],
  [0.9167, -80.6], [0.9231, -80.7], [0.9274, -83], [0.9302, -86.8], [0.9324, -89.7], [0.9338, -89.3], [0.9366, -84.3],
  [0.9402, -80.1], [0.9455, -78.1], [0.9508, -79.1], [0.9569, -82.6], [0.9622, -86.6], [0.9665, -88.1], [0.9711, -88.8],
  [0.9753, -87.2], [0.98, -83], [0.9853, -79.7], [0.9906, -78.7], [1, -78.7],
];

const timeTicks = Array.from({ length: 13 }, (_, i) => i * 20);
const freqTicks = Array.from({ length: 11 }, (_, i) => i / 10);

const variables = [
  { name: "f", size: "1×128", type: "double" },
  { name: "fft1", size: "1×256", type: "double" },
  { name: "fft_dB", size: "1×256", type: "double", selected: true },
  { name: "n", size: "1×256", type: "double" },
  { name: "noise", size: "1×256", type: "double" },
  { name: "y", size: "1×256", type: "double" },
];

/* ---------- page ---------- */

export default function App() {
  return (
    <>
      <GlobalStyle />
      <Window>
        <TitleBar>
          <Lights>
            <Light $fill="#fc5f5b" $edge="#e0443f" aria-label="关闭" />
            <Light $fill="#fdbd35" $edge="#dfa023" aria-label="最小化" />
            <Light $fill="#38cb45" $edge="#25ad31" aria-label="缩放" />
          </Lights>
          <Title>Signal Analyzer - 无标题*</Title>
        </TitleBar>

        <TabBar>
          <Tab>分析器</Tab>
          <Tab $active>显示</Tab>
          <Tab>时间</Tab>
          <Tab>频谱</Tab>
          <HelpButton aria-label="帮助">
            <HelpIcon />
            <Arrow />
          </HelpButton>
        </TabBar>

        <Ribbon>
          <Group $width={402} $pad={16}>
            <GroupBody>
              <BigButton $width={102}>
                <GridIcon />
                <BigLabel>显示 网格</BigLabel>
                <Arrow />
              </BigButton>
              <Stack $gap={24}>
                <RowButton>
                  <IconSlot><EraseIcon /></IconSlot>
                  <RowText>清空 显示画面</RowText>
                  <Arrow />
                </RowButton>
                <RowButton>
                  <IconSlot><LegendIcon /></IconSlot>
                  <RowText>图例</RowText>
                  <Arrow />
                </RowButton>
                <RowLabel $muted>
                  <IconSlot>
                    <CheckBox $size={28} $disabled><input type="checkbox" disabled /></CheckBox>
                  </IconSlot>
                  <RowText>链接时间</RowText>
                </RowLabel>
              </Stack>
            </GroupBody>
            <GroupTitle>显示选项</GroupTitle>
          </Group>

          <Group $width={306} $pad={16}>
            <GroupBody>
              <BigButton $width={96}>
                <CursorIcon />
                <BigLabel>数据游标</BigLabel>
                <Arrow />
              </BigButton>
              <Stack $gap={22} $drop>
                <RowLabel>
                  <IconSlot>
                    <CheckBox $size={28}>
                      <input type="checkbox" defaultChecked />
                      <Tick />
                    </CheckBox>
                  </IconSlot>
                  <RowText>吸附到数据</RowText>
                </RowLabel>
              </Stack>
            </GroupBody>
            <GroupTitle>测量</GroupTitle>
          </Group>

          <Group $width={202} $pad={4}>
            <GroupBody>
              <ToolGrid>
                <ToolButton aria-label="放大"><ZoomInIcon /></ToolButton>
                <ToolButton aria-label="水平缩放"><ZoomXIcon /></ToolButton>
                <ToolButton aria-label="垂直缩放"><ZoomYIcon /></ToolButton>
                <ToolButton aria-label="指针" $pressed><PointerIcon /></ToolButton>
                <ToolButton aria-label="缩小"><ZoomOutIcon /></ToolButton>
                <ToolButton aria-label="适合视图"><FitIcon /></ToolButton>
                <ToolButton aria-label="平移"><PanIcon /></ToolButton>
              </ToolGrid>
            </GroupBody>
            <GroupTitle>缩放和平移</GroupTitle>
          </Group>

          <Group $width={252} $pad={6}>
            <GroupBody>
              <BigButton $width={68} $pressed>
                <TimeIcon />
                <BigLabel>时间</BigLabel>
              </BigButton>
              <SplitButton>
                <SplitTop aria-label="频谱视图"><SpectrumIcon /></SplitTop>
                <SplitBottom>
                  频谱
                  <Arrow />
                </SplitBottom>
              </SplitButton>
              <BigButton $width={72}>
                <SpectrogramIcon />
                <BigLabel>频谱图</BigLabel>
              </BigButton>
            </GroupBody>
            <GroupTitle>视图</GroupTitle>
          </Group>

          <Group $width={312} $pad={16}>
            <GroupBody>
              <BigButton $width={72}>
                <PannerIcon />
                <BigLabel>平移器</BigLabel>
              </BigButton>
              <Stack $gap={20} $drop>
                <RowButton>
                  <IconSlot><ExtractIcon /></IconSlot>
                  <RowText>提取信号</RowText>
                  <Arrow />
                </RowButton>
                <RowLabel $muted>
                  <IconSlot>
                    <CheckBox $size={28} $disabled><input type="checkbox" disabled /></CheckBox>
                  </IconSlot>
                  <RowText>保留开始时间</RowText>
                </RowLabel>
              </Stack>
            </GroupBody>
            <GroupTitle>关注区域</GroupTitle>
          </Group>

          <Group $width={304} $pad={14}>
            <GroupBody>
              <RangeForm>
                <label htmlFor="unit">单位:</label>
                <SelectBox>
                  <select id="unit" defaultValue="采样">
                    <option>采样</option>
                  </select>
                  <Arrow />
                </SelectBox>
                <label htmlFor="min">最小值:</label>
                <RangeInput id="min" defaultValue="0" />
                <label htmlFor="max">最大值:</label>
                <RangeInput id="max" defaultValue="255" />
              </RangeForm>
            </GroupBody>
            <GroupTitle>时间范围</GroupTitle>
          </Group>

          <Group $width={310} $pad={16}>
            <GroupBody>
              <BigButton $width={144}>
                <CopyIcon />
                <BigLabel>复制显示画面</BigLabel>
                <Arrow />
              </BigButton>
              <Stack $gap={26}>
                <BigButton $width={102}>
                  <ScriptIcon />
                  <BigLabel>生成 脚本</BigLabel>
                  <Arrow />
                </BigButton>
              </Stack>
            </GroupBody>
            <GroupTitle>共享</GroupTitle>
          </Group>

          <CollapseButton aria-label="折叠工具条"><CollapseIcon /></CollapseButton>
        </Ribbon>

        <Main>
          <LeftColumn>
            <SignalPanel>
              <FilterInput placeholder="筛选信号" aria-label="筛选信号" />
              <SignalTable>
                <colgroup>
                  <col width="42" />
                  <col width="218" />
                  <col width="56" />
                  <col width="82" />
                  <col width="82" />
                  <col />
                </colgroup>
                <thead>
                  <tr>
                    <th />
                    <th>名称</th>
                    <th>线条</th>
                    <th>信息</th>
                    <th>时间</th>
                    <th>开始时间</th>
                  </tr>
                </thead>
                <tbody>
                  <tr>
                    <td>
                      <CheckBox $size={32}>
                        <input type="checkbox" defaultChecked aria-label="显示 y" />
                        <Tick color="#111" />
                      </CheckBox>
                    </td>
                    <td>y</td>
                    <td><LineSwatch /></td>
                    <td />
                    <td />
                    <td />
                  </tr>
                </tbody>
              </SignalTable>
              <GearButton aria-label="列设置"><GearIcon /></GearButton>
            </SignalPanel>

            <RowSplitter />

            <WorkspacePanel>
              <WorkspaceTitle>工作区浏览器</WorkspaceTitle>
              <WorkspaceBody>
                <WorkspaceTable>
                  <colgroup>
                    <col width="215" />
                    <col width="213" />
                    <col />
                  </colgroup>
                  <thead>
                    <tr>
                      <th>
                        名称
                        <SortMark width="14" height="12" viewBox="0 0 14 12" aria-hidden="true">
                          <path d="M7 0L14 12H0Z" fill="#999" />
                        </SortMark>
                      </th>
                      <th>大小</th>
                      <th>类</th>
                    </tr>
                  </thead>
                  <tbody>
                    {variables.map((v) => (
                      <VariableRow key={v.name} $selected={v.selected}>
                        <td><VariableName><MatrixIcon />{v.name}</VariableName></td>
                        <td>{v.size}</td>
                        <td>{v.type}</td>
                      </VariableRow>
                    ))}
                  </tbody>
                </WorkspaceTable>
              </WorkspaceBody>
            </WorkspacePanel>
          </LeftColumn>

          <ColumnSplitter />

          <Canvas>
            <Legend>y</Legend>
            <Chart
              grow={530}
              margin={{ top: 9, right: 26, bottom: 83, left: 111 }}
              xRange={[0, 255]}
              yRange={[-1.1, 1.09]}
              xTicks={timeTicks}
              yTicks={[1, 0.5, 0, -0.5, -1]}
              formatX={String}
              formatY={oneDecimal}
              xTitle="采样"
              titleShift={[-2, 0]}
              points={signal}
              frame={{ color: "#222", width: 2 }}
            />
            <Chart
              grow={576}
              margin={{ top: 10, right: 26, bottom: 78, left: 111 }}
              xRange={[0, 1.001]}
              yRange={[-120.76, 2.27]}
              xTicks={freqTicks}
              yTicks={[0, -30, -60, -90, -120]}
              formatX={oneDecimal}
              formatY={(v) => minus(String(v))}
              xTitle="归一化频率 (×π radians/sample)"
              yTitle="功率谱 (dB)"
              titleShift={[-26, -14]}
              points={spectrum}
              smooth
              frame={{ color: "#808080", width: 4 }}
            />
          </Canvas>
        </Main>

        <NoteStroke width="130" height="130" viewBox="0 0 130 130" aria-hidden="true">
          <path d="M12 12C45 26 80 60 118 121" fill="none" stroke="#000" strokeWidth="6" strokeLinecap="round" />
        </NoteStroke>
        <Note>点击频谱即可查看功率谱</Note>
      </Window>
    </>
  );
}
